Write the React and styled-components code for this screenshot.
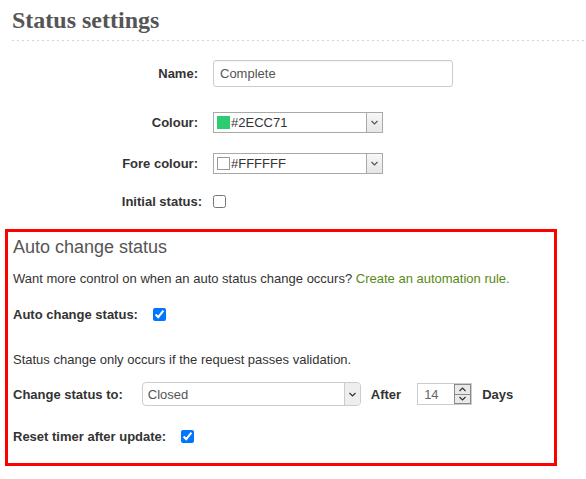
import React from "react";
import styled, { createGlobalStyle } from "styled-components";

const Global = createGlobalStyle`
  html, body { margin: 0; padding: 0; background: #fff; }
  body {
    font-family: "Liberation Sans", Arial, sans-serif;
    font-size: 13px;
    color: #333;
  }
  * { box-sizing: border-box; }
`;

const Page = styled.div`
  width: 586px;
  height: 479px;
  overflow: hidden;
`;

const Header = styled.div`
  margin-left: 12px;
  padding-top: 6px;
  padding-bottom: 7px;
  background-image: linear-gradient(to right, #d6d6d6 2px, transparent 2px);
  background-size: 5px 1px;
  background-repeat: repeat-x;
  background-position: 0 100%;
`;

const Title = styled.h1`
  margin: 0;
  font-family: "Liberation Serif", "Times New Roman", serif;
  font-weight: bold;
  font-size: 24px;
  line-height: 28px;
  color: #555;
`;

const Form = styled.div`
  display: grid;
  grid-template-columns: 198px 1fr;
  column-gap: 15px;
  align-items: center;
  margin-top: 19px;
`;

const Label = styled.label`
  text-align: right;
  font-weight: bold;
  color: #333;
  margin-top: ${(p) => p.$top ?? 0}px;
  margin-right: ${(p) => -(p.$shift ?? 0)}px;
`;

const Control = styled.div`
  display: flex;
  align-items: center;
  margin-top: ${(p) => p.$top ?? 0}px;
`;

const TextInput = styled.div`
  width: 240px;
  height: 27px;
  border: 1px solid #ccc;
  border-radius: 3px;
  padding-left: 6px;
  display: flex;
  align-items: center;
  color: #555;
  box-shadow: inset 0 1px 1px rgba(0, 0, 0, 0.04);
`;

const ColourSelect = styled.div`
  width: 170px;
  height: 21px;
  border: 1px solid #a9a9a9;
  display: flex;
  align-items: center;
  background: #fff;
`;

const Swatch = styled.span`
  width: 13px;
  height: 13px;
  margin-left: 3px;
  margin-right: 1px;
  background: ${(p) => p.$color};
  border: 1px solid ${(p) => (p.$color === "#FFFFFF" ? "#999" : p.$color)};
`;

const SelectText = styled.span`
  flex: 1;
  color: #333;
  font-size: 13px;
`;

const LegacyArrow = styled.span`
  width: 16px;
  height: 100%;
  border-left: 1px solid #a9a9a9;
  background: linear-gradient(#f7f7f7, #e6e6e6);
  display: flex;
  align-items: center;
  justify-content: center;
`;

const Chevron = ({ up, color = "#555" }) => (
  <svg width="7" height="5" viewBox="0 0 7 5">
    <polyline
      points={up ? "0.5,4 3.5,1 6.5,4" : "0.5,1 3.5,4 6.5,1"}
      fill="none"
      stroke={color}
      strokeWidth="1.2"
    />
  </svg>
);

const Check = styled.input.attrs({ type: "checkbox" })`
  width: 13px;
  height: 13px;
  margin: 0;
`;

const AutoBox = styled.section`
  margin: 20px 0 0 5px;
  width: 552px;
  border: 3px solid #f00;
  padding: 5px 5px 19px 5px;
`;

const BoxTitle = styled.h2`
  margin: 0;
  font-weight: normal;
  font-size: 18px;
  line-height: 21px;
  color: #555;
`;

const Text = styled.p`
  margin: ${(p) => p.$top}px 0 0 0;
  line-height: 16px;
  color: #333;
`;

const Link = styled.a`
  color: #5a8a14;
  text-decoration: none;
`;

const Row = styled.div`
  display: flex;
  align-items: center;
  margin-top: ${(p) => p.$top}px;
  min-height: 16px;
`;

const RowLabel = styled.span`
  font-weight: bold;
  color: #333;
  margin-right: ${(p) => p.$gap ?? 15}px;
`;

const StatusSelect = styled.div`
  width: 219px;
  height: 24px;
  border: 1px solid #ccc;
  border-radius: 4px;
  display: flex;
  align-items: center;
  overflow: hidden;
  margin-right: 10px;
`;

const StatusText = styled.span`
  flex: 1;
  padding-left: 5px;
  color: #555;
`;

const StatusArrow = styled.span`
  width: 16px;
  height: 100%;
  border-left: 1px solid #ccc;
  background: #eee;
  display: flex;
  align-items: center;
  justify-content: center;
`;

const NumberBox = styled.div`
  width: 55px;
  height: 22px;
  border: 1px solid #ccc;
  display: flex;
  align-items: stretch;
  margin: 0 10px 0 16px;
`;

const NumberText = styled.span`
  flex: 1;
  padding-left: 6px;
  display: flex;
  align-items: center;
  color: #666;
`;

const Spinner = styled.span`
  width: 17px;
  display: flex;
  flex-direction: column;
`;

const SpinBtn = styled.span`
  flex: 1;
  border: 1px solid #8a8a8a;
  background: #e9e9e9;
  display: flex;
  align-items: center;
  justify-content: center;
  & + & { border-top: none; }
`;

export default function App() {
  return (
    <Page>
      <Global />
      <Header>
        <Title>Status settings</Title>
      </Header>
      <Form>
        <Label>Name:</Label>
        <Control>
          <TextInput>Complete</TextInput>
        </Control>

        <Label $top={25}>Colour:</Label>
        <Control $top={25}>
          <ColourSelect>
            <Swatch $color="#2ECC71" />
            <SelectText>#2ECC71</SelectText>
            <LegacyArrow>
              <Chevron />
            </LegacyArrow>
          </ColourSelect>
        </Control>

        <Label $top={20}>Fore colour:</Label>
        <Control $top={20}>
          <ColourSelect>
            <Swatch $color="#FFFFFF" />
            <SelectText>#FFFFFF</SelectText>
            <LegacyArrow>
              <Chevron />
            </LegacyArrow>
          </ColourSelect>
        </Control>

        <Label $top={20} $shift={4}>Initial status:</Label>
        <Control $top={20}>
          <Check readOnly />
        </Control>
      </Form>

      <AutoBox>
        <BoxTitle>Auto change status</BoxTitle>
        <Text $top={13}>
          Want more control on when an auto status change occurs?{" "}
          <Link href="#">Create an automation rule.</Link>
        </Text>
        <Row $top={19}>
          <RowLabel>Auto change status:</RowLabel>
          <Check defaultChecked />
        </Row>
        <Text $top={30}>Status change only occurs if the request passes validation.</Text>
        <Row $top={14}>
          <RowLabel $gap={19}>Change status to:</RowLabel>
          <StatusSelect>
            <StatusText>Closed</StatusText>
            <StatusArrow>
              <Chevron color="#333" />
            </StatusArrow>
          </StatusSelect>
          <RowLabel $gap={0}>After</RowLabel>
          <NumberBox>
            <NumberText>14</NumberText>
            <Spinner>
              <SpinBtn>
                <Chevron up color="#333" />
              </SpinBtn>
              <SpinBtn>
                <Chevron color="#333" />
              </SpinBtn>
            </Spinner>
          </NumberBox>
          <RowLabel $gap={0}>Days</RowLabel>
        </Row>
        <Row $top={22}>
          <RowLabel>Reset timer after update:</RowLabel>
          <Check defaultChecked />
        </Row>
      </AutoBox>
    </Page>
  );
}
